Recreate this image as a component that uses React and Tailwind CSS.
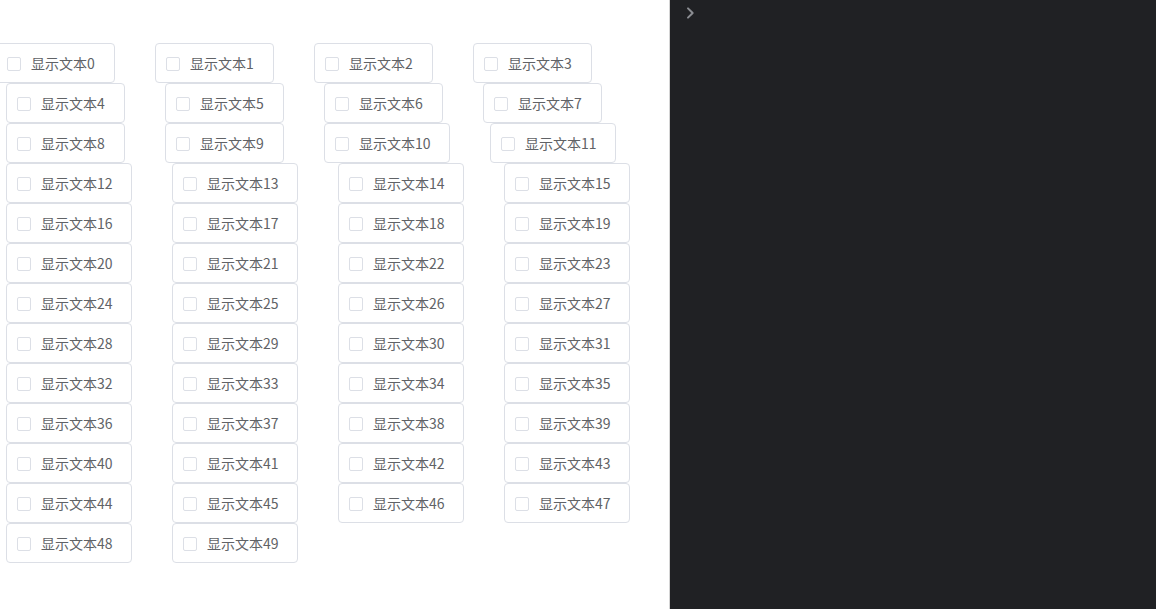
import React from "react";

function Item({ i }) {
  const w = i < 10 ? "w-[119px]" : "w-[126px]";
  const ml = i === 0 ? "ml-0" : "ml-[10px]";
  return (
    <label
      className={`${w} ${ml} mr-[30px] h-[40px] box-border border border-[#dcdfe6] rounded-[4px] flex items-center pl-[10px] shrink-0 cursor-pointer`}
    >
      <span className="w-[14px] h-[14px] mt-[1px] border border-[#dcdfe6] rounded-[2px] bg-white box-border shrink-0" />
      <span className="pl-[10px] text-[14px] leading-[14px] text-[#606266] whitespace-nowrap">
        显示文本{i}
      </span>
    </label>
  );
}

export default function App() {
  const items = Array.from({ length: 50 }, (_, i) => i);
  return (
    <div
      className="flex w-[1156px] h-[609px] overflow-hidden bg-white"
      style={{ fontFamily: '"Noto Sans CJK SC", "Noto Sans", sans-serif' }}
    >
      <div className="w-[669px] h-full overflow-hidden pt-[43px] shrink-0">
        <div className="flex flex-wrap -ml-[4px] w-[673px]">
          {items.map((i) => (
            <Item key={i} i={i} />
          ))}
        </div>
      </div>
      <div className="flex-1 h-full bg-[#202124] border-l border-[#d4d4d4] pl-[12px] pt-[5px]">
        <svg width="16" height="16" viewBox="0 0 24 24" fill="none" stroke="#8b8d92" strokeWidth="3" strokeLinecap="round" strokeLinejoin="round">
          <path d="M9 5l7 7-7 7" />
        </svg>
      </div>
    </div>
  );
}
